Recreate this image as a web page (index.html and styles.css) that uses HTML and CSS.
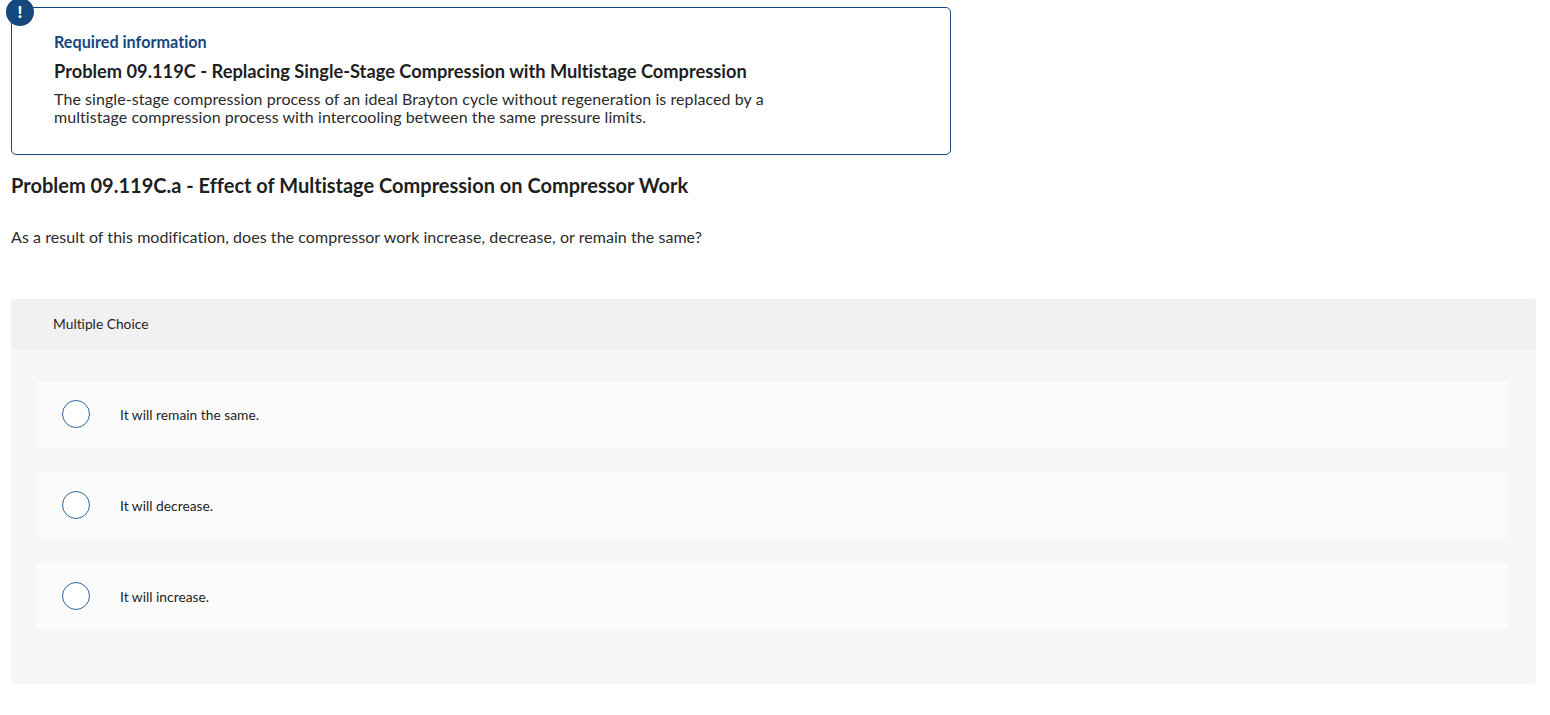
FILE: index.html
```html
<!DOCTYPE html>
<html lang="en">
<head>
  <meta charset="UTF-8">
  <title>Problem 09.119C</title>
  <link rel="stylesheet" href="styles.css">
</head>
<body>
  <div class="required">
    <span class="required-badge">!</span>
    <div class="required-label">Required information</div>
    <h2 class="required-title">Problem 09.119C - Replacing Single-Stage Compression with Multistage Compression</h2>
    <p class="required-text">The single-stage compression process of an ideal Brayton cycle without regeneration is replaced by a<br>multistage compression process with intercooling between the same pressure limits.</p>
  </div>
  <h3 class="part-title">Problem 09.119C.a - Effect of Multistage Compression on Compressor Work</h3>
  <p class="question">As a result of this modification, does the compressor work increase, decrease, or remain the same?</p>
  <div class="choices">
    <div class="choices-head">Multiple Choice</div>
    <div class="choices-list">
      <div class="choice"><span class="radio"></span><span class="choice-text">It will remain the same.</span></div>
      <div class="choice"><span class="radio"></span><span class="choice-text">It will decrease.</span></div>
      <div class="choice"><span class="radio"></span><span class="choice-text">It will increase.</span></div>
    </div>
  </div>
</body>
</html>
```

FILE: styles.css
```css
html {
  font: 100%/1.0 Lato, sans-serif;
  font-variant-ligatures: none;
}
body {
  margin: 0;
  padding: 7px 14px 0 11px;
  color: #1f1f1f;
  overflow: hidden;
  height: 708px;
}
.required {
  position: relative;
  box-sizing: border-box;
  width: 940px;
  height: 148px;
  padding: 26px 42px 0;
  border: 1px solid #14487f;
  border-radius: 5px;
}
.required-badge {
  position: absolute;
  left: -6px;
  top: -10px;
  width: 28px;
  height: 28px;
  border-radius: 50%;
  background: #14487f;
  color: #fff;
  font-weight: 900;
  font-size: 17px;
  line-height: 28px;
  text-align: center;
}
.required-label {
  color: #14487f;
  font-weight: 700;
  font-size: 16.2px;
  line-height: 16px;
}
.required-title {
  margin: 10px 0 0;
  font-size: 18.25px;
  font-weight: 700;
  line-height: 22px;
}
.required-text {
  margin: 8px 0 0;
  color: #2b2b2b;
  font-size: 16px;
  letter-spacing: 0.07px;
  line-height: 18px;
}
.part-title {
  margin: 18px 0 0;
  font-size: 20px;
  font-weight: 700;
  line-height: 24px;
}
.question {
  margin: 31px 0 0;
  color: #2b2b2b;
  font-size: 16px;
  letter-spacing: 0.05px;
  line-height: 18px;
}
.choices {
  margin-top: 53px;
  height: 385px;
  background: #f6f6f6;
  border-radius: 3px;
}
.choices-head {
  box-sizing: border-box;
  height: 50px;
  padding: 17px 42px 0;
  background: #f1f1f1;
  border-radius: 3px 3px 0 0;
  font-size: 13.8px;
  line-height: 16px;
}
.choices-list {
  display: flex;
  flex-direction: column;
  gap: 25px;
  margin: 32px 28px 0 26px;
}
.choice {
  display: flex;
  align-items: center;
  height: 66px;
  padding-left: 25px;
  background: #fbfbfb;
  border-radius: 3px;
}
.radio {
  box-sizing: border-box;
  width: 28px;
  height: 28px;
  border: 1px solid #2f6699;
  border-radius: 50%;
  background: #fff;
}
.choice-text {
  margin: 2px 0 0 30px;
  font-size: 13.8px;
  line-height: 16px;
}
```
